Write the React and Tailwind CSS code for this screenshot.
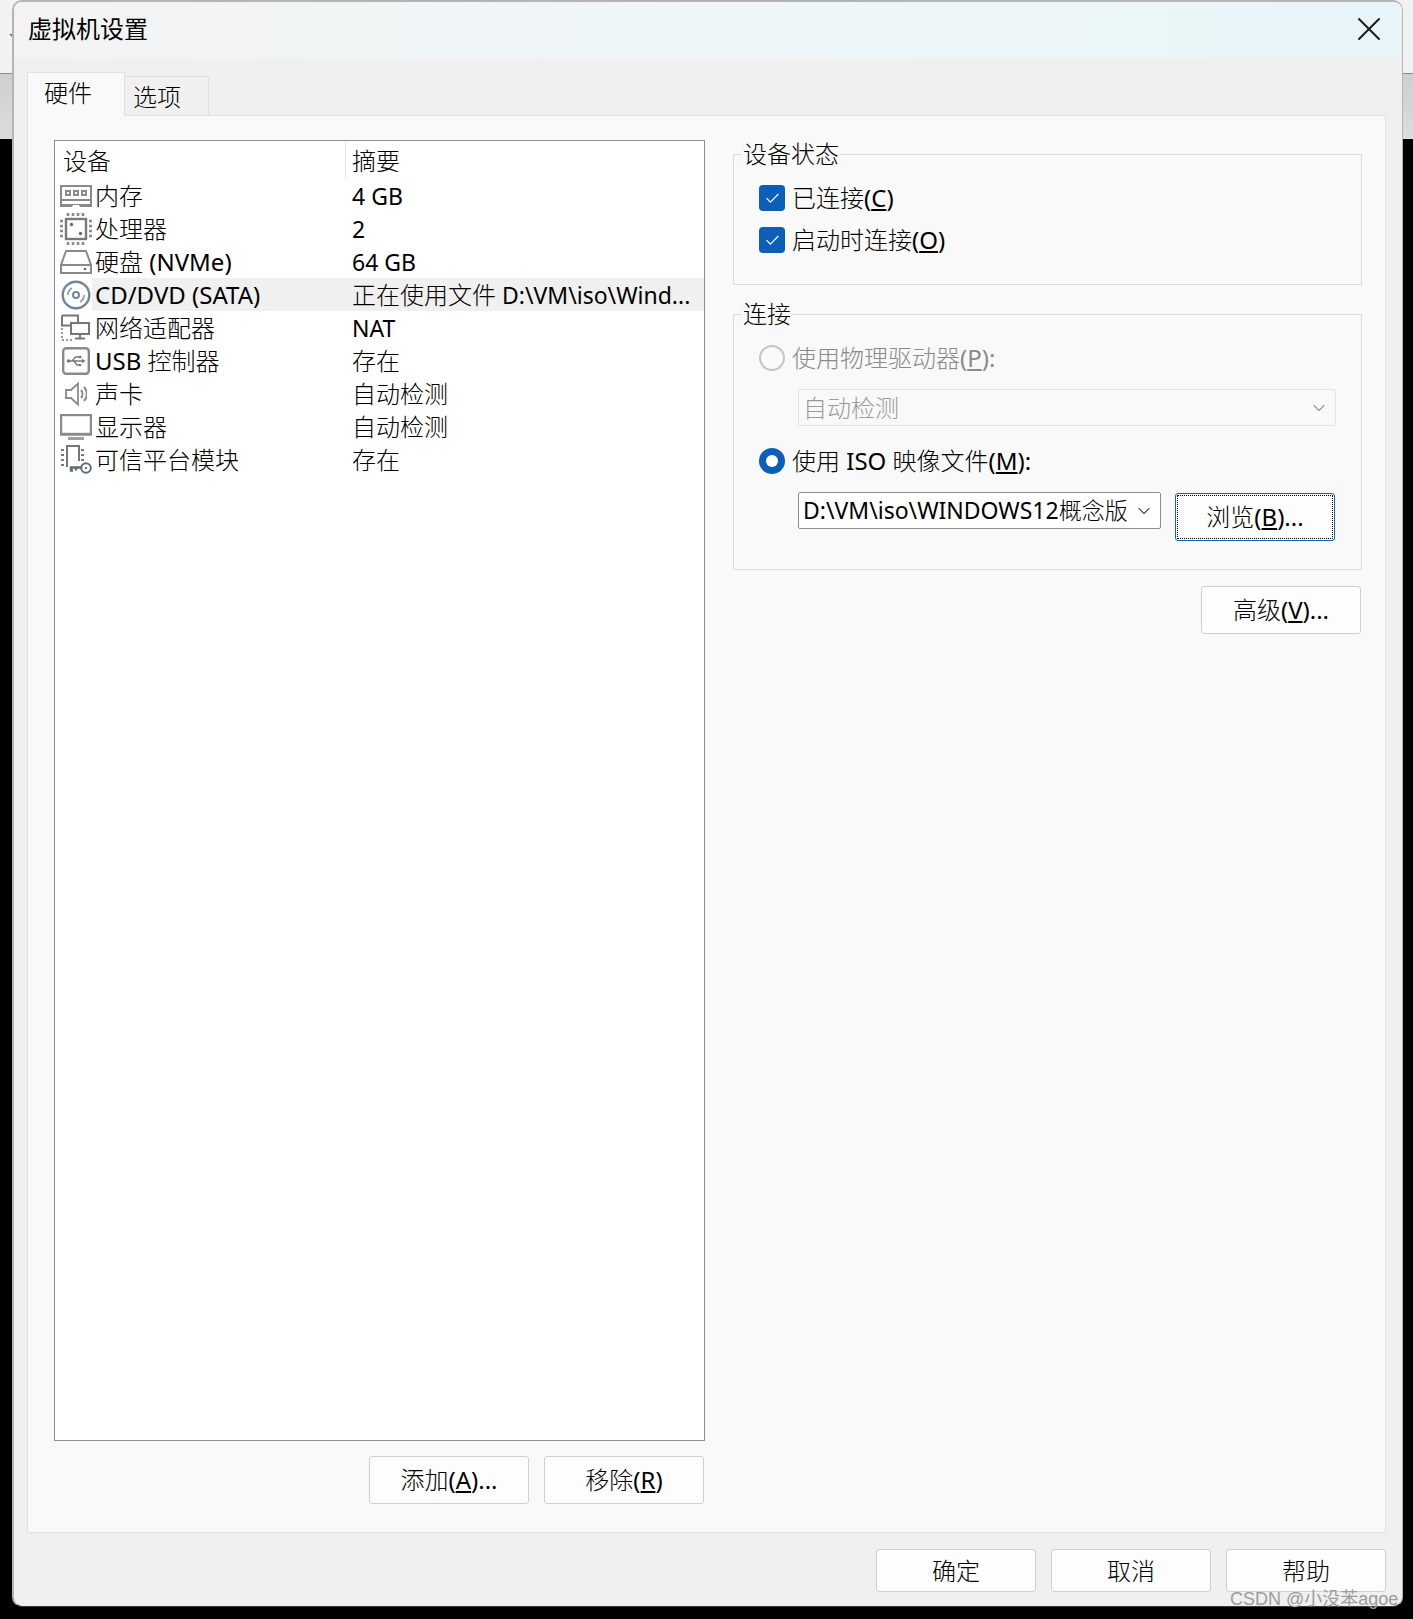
import React from 'react';
import { X, ChevronDown, Check } from 'lucide-react';

const FONT = "font-['Noto_Sans','Noto_Sans_CJK_SC',sans-serif]";

// latin runs are regular weight, the chinese stays light
function Mixed({ text, latin = '' }) {
  return text.split(/([\x20-\x7e]+)/).map((part, i) =>
    /[\x21-\x7e]/.test(part) ? <span key={i} className={`font-normal ${latin}`}>{part}</span> : part
  );
}

function RamIcon() {
  return (
    <svg width="32" height="22" viewBox="0 0 32 22" fill="none">
      <path d="M0 0h32v22H20l-1-2h-6l-1 2H0z" fill="#8a8a8a" />
      <rect x="2" y="2" width="28" height="12" fill="#fff" />
      <rect x="2" y="16" width="28" height="3" fill="#fff" />
      <rect x="5" y="5" width="6" height="6" fill="#8a8a8a" />
      <rect x="13" y="5" width="6" height="6" fill="#8a8a8a" />
      <rect x="21" y="5" width="6" height="6" fill="#8a8a8a" />
      <rect x="7" y="7" width="2" height="2" fill="#fff" />
      <rect x="15" y="7" width="2" height="2" fill="#fff" />
      <rect x="23" y="7" width="2" height="2" fill="#fff" />
    </svg>
  );
}

function CpuIcon() {
  return (
    <svg width="32" height="32" viewBox="0 0 32 32" fill="none">
      <rect x="6" y="6" width="20" height="20" fill="none" stroke="#7a7a7a" strokeWidth="2.4" />
      <circle cx="11.5" cy="11.5" r="1.7" fill="#6a6a6a" />
      <circle cx="20.5" cy="20.5" r="1.7" fill="#6a6a6a" />
      <path d="M8 0v3M13 0v3M18 0v3M23 0v3M8 29v3M13 29v3M18 29v3M23 29v3" stroke="#8a8a8a" strokeWidth="2.6" />
      <path d="M0 8h3M0 13h3M0 18h3M0 23h3M29 8h3M29 13h3M29 18h3M29 23h3" stroke="#8a8a8a" strokeWidth="2.6" />
    </svg>
  );
}

function DiskIcon() {
  return (
    <svg width="32" height="24" viewBox="0 0 32 24" fill="none">
      <path d="M6 1h20l5 14H1z" stroke="#8a8a8a" strokeWidth="2" fill="#fff" />
      <rect x="0" y="14" width="32" height="10" fill="#8a8a8a" />
      <rect x="2" y="16" width="28" height="6" fill="#fff" />
      <circle cx="25" cy="19" r="1.3" fill="#666" />
    </svg>
  );
}

function DiscIcon() {
  return (
    <svg width="30" height="30" viewBox="0 0 30 30" fill="none">
      <circle cx="15" cy="15" r="13.3" stroke="#6f8799" strokeWidth="2.4" />
      <circle cx="15" cy="15" r="3" stroke="#6f8799" strokeWidth="2" />
      <path d="M7 15a8 8 0 0 1 4-7M23 15a8 8 0 0 1-4 7" stroke="#8ba0b0" strokeWidth="1.8" />
    </svg>
  );
}

function NetIcon() {
  return (
    <svg width="30" height="28" viewBox="0 0 30 28" fill="none">
      <path d="M1 1.5h16v8" stroke="#777" strokeWidth="2" />
      <path d="M1 1.5v10h8" stroke="#777" strokeWidth="2" />
      <rect x="10" y="9" width="18" height="11" stroke="#777" strokeWidth="2" fill="#fff" />
      <path d="M19 20v4M14 24.5h10" stroke="#777" strokeWidth="2" />
      <path d="M1 14v12h12" stroke="#999" strokeWidth="2" strokeDasharray="2 2" />
    </svg>
  );
}

function UsbIcon() {
  return (
    <svg width="28" height="28" viewBox="0 0 28 28" fill="none">
      <rect x="1.2" y="1.2" width="25.6" height="25.6" rx="3" stroke="#8a8a8a" strokeWidth="2.4" />
      <path d="M7 14h14M10 14l3.5-4H17M12 14l3 4h2" stroke="#777" strokeWidth="1.3" />
      <circle cx="6.5" cy="14" r="1.8" fill="#777" />
      <path d="M20 11.8l3.5 2.2-3.5 2.2z" fill="#777" />
      <rect x="17" y="8.8" width="2.4" height="2.4" fill="#777" />
      <circle cx="18" cy="18" r="1.3" fill="#777" />
    </svg>
  );
}

function SpeakerIcon() {
  return (
    <svg width="22" height="26" viewBox="0 0 22 26" fill="none">
      <path d="M1 9h5l7-6.5v21L6 17H1z" stroke="#8a8a8a" strokeWidth="1.8" />
      <path d="M16 9a6 6 0 0 1 0 8M19 6a10 10 0 0 1 0 14" stroke="#8a8a8a" strokeWidth="2" />
    </svg>
  );
}

function MonitorIcon() {
  return (
    <svg width="32" height="26" viewBox="0 0 32 26" fill="none">
      <rect x="1" y="1" width="30" height="19" stroke="#8a8a8a" strokeWidth="2.4" fill="#fff" />
      <path d="M0 20.5h32" stroke="#8a8a8a" strokeWidth="2.4" />
      <rect x="8" y="23" width="16" height="3" fill="#a0a0a0" />
    </svg>
  );
}

function TpmIcon() {
  return (
    <svg width="32" height="30" viewBox="0 0 32 30" fill="none">
      <path d="M7 22V1h12v15" stroke="#6e7a84" strokeWidth="2" />
      <path d="M1 5h3M1 10h3M1 15h3M1 20h3M21 5h3M21 10h3M21 15h3" stroke="#6e7a84" strokeWidth="2" />
      <circle cx="26" cy="23" r="4.8" stroke="#5f6b75" strokeWidth="2" fill="#fff" />
      <circle cx="26" cy="23" r="1.2" fill="#5f6b75" />
      <path d="M21 22.5H11v3h2M16 22.5v3" stroke="#5f6b75" strokeWidth="2.4" />
    </svg>
  );
}

const devices = [
  { icon: <RamIcon />, name: '内存', summary: '4 GB' },
  { icon: <CpuIcon />, name: '处理器', summary: '2' },
  { icon: <DiskIcon />, name: '硬盘 (NVMe)', summary: '64 GB' },
  { icon: <DiscIcon />, name: 'CD/DVD (SATA)', summary: '正在使用文件 D:\\VM\\iso\\Wind...', active: true },
  { icon: <NetIcon />, name: '网络适配器', summary: 'NAT' },
  { icon: <UsbIcon />, name: 'USB 控制器', summary: '存在' },
  { icon: <SpeakerIcon />, name: '声卡', summary: '自动检测' },
  { icon: <MonitorIcon />, name: '显示器', summary: '自动检测' },
  { icon: <TpmIcon />, name: '可信平台模块', summary: '存在' },
];

function Btn({ className, children }) {
  return (
    <button className={`flex items-center justify-center rounded-[3px] border border-[#d0d0d0] bg-[#fdfdfd] text-[24px] font-light text-black ${className}`}>
      {children}
    </button>
  );
}

function Mn({ children }) {
  return <span className="font-normal underline underline-offset-2">{children}</span>;
}

function P({ children }) {
  return <span className="font-normal">{children}</span>;
}

function CheckRow({ children }) {
  return (
    <div className="flex h-[26px] items-center gap-[7px]">
      <span className="flex size-[26px] items-center justify-center rounded-[4px] bg-[#0b5fb8]">
        <Check size={17} color="#fff" strokeWidth={1.6} />
      </span>
      <span className="text-[24px] font-light text-black">{children}</span>
    </div>
  );
}

function Group({ title, className, children }) {
  return (
    <div className={`relative border border-[#dcdcdc] pl-[25px] pt-[30px] ${className}`}>
      <span className="absolute left-[8px] top-[-16px] bg-[#f9f9f9] px-[1px] text-[24px] leading-[30px] font-light text-black">{title}</span>
      {children}
    </div>
  );
}

export default function App() {
  return (
    <div className={`relative h-[1619px] w-[1413px] overflow-hidden bg-black ${FONT}`}>
      <div className="flex h-[74px] items-center border-b border-[#8c8c8c] bg-[#f2f2f2] pb-[1px]">
        <span className="ml-[9px] h-0 w-0 border-x-[4px] border-t-[4px] border-x-transparent border-t-[#777]" />
      </div>
      <div className="h-[65px] bg-gradient-to-b from-[#cfcfcf] to-[#dcdcdc]" />

      <div className="absolute left-[12px] top-0 flex h-[1607px] w-[1391px] flex-col overflow-hidden rounded-[10px] border border-l-2 border-t-2 border-[#b4b4b4] border-b-[#3a3a3a] bg-[#f0f0f0]">
        <div className="flex h-[56px] items-center justify-between bg-gradient-to-r from-[#f3f3f3] via-[#eef6f8] to-[#e8f5f8] pb-[2px] pl-[14px] pr-[13px]">
          <span className="text-[24px] text-black">虚拟机设置</span>
          <X size={40} color="#1a1a1a" strokeWidth={1.2} />
        </div>

        <div className="mt-[14px] flex items-end pl-[13px]">
          <div className="relative z-10 -mb-px flex h-[44px] w-[98px] items-start border border-b-0 border-[#e2e2e2] bg-[#f9f9f9] pl-[16px] text-[24px] leading-[39px] font-light text-black">硬件</div>
          <div className="flex h-[39px] w-[84px] items-start border border-b-0 border-l-0 border-[#e2e2e2] bg-[#f0f0f0] pl-[8px] text-[24px] leading-[39px] font-light text-black">选项</div>
        </div>

        <div className="ml-[13px] flex h-[1418px] w-[1359px] gap-[28px] border border-[#e2e2e2] bg-[#f9f9f9] pl-[26px] pt-[24px]">
          <div className="flex w-[651px] flex-col">
            <div className="h-[1301px] border border-[#8a8f9a] bg-white">
              <div className="flex h-[38px] items-center text-[24px] font-light text-black">
                <div className="h-full w-[291px] border-r border-[#e4e4e4] pl-[8px] leading-[40px]">设备</div>
                <div className="pl-[6px] pt-[2px]">摘要</div>
              </div>
              {devices.map((d) => (
                <div key={d.name} className="flex h-[33px] items-center">
                  <div className="flex w-[37px] justify-center pl-[5px]">{d.icon}</div>
                  <div className={`flex h-full flex-1 items-center text-[24px] font-light text-black ${d.active ? 'bg-[#f0f0f0]' : ''}`}>
                    <div className="w-[254px] whitespace-pre pl-[3px]"><Mixed text={d.name} /></div>
                    <div className="whitespace-pre pl-[6px]"><Mixed text={d.summary} latin="text-[23px]" /></div>
                  </div>
                </div>
              ))}
            </div>
            <div className="mt-[15px] flex justify-end gap-[15px] pr-[1px]">
              <Btn className="h-[48px] w-[160px]">添加<P>(</P><Mn>A</Mn><P>)...</P></Btn>
              <Btn className="h-[48px] w-[160px]">移除<P>(</P><Mn>R</Mn><P>)</P></Btn>
            </div>
          </div>

          <div className="flex w-[629px] flex-col pt-[14px]">
            <Group title="设备状态" className="h-[131px]">
              <div className="flex flex-col gap-[16px]">
                <CheckRow>已连接<P>(</P><Mn>C</Mn><P>)</P></CheckRow>
                <CheckRow>启动时连接<P>(</P><Mn>O</Mn><P>)</P></CheckRow>
              </div>
            </Group>

            <Group title="连接" className="mt-[29px] h-[256px]">
              <div className="flex h-[26px] items-center gap-[7px]">
                <span className="size-[26px] rounded-full border-2 border-[#c4c4c4]" />
                <span className="text-[24px] font-light text-[#8a8a8a]">使用物理驱动器<P>(</P><Mn>P</Mn><P>):</P></span>
              </div>
              <div className="ml-[39px] mt-[18px] flex h-[37px] w-[538px] items-center justify-between rounded-[2px] border border-[#e4e4e4] bg-[#f9f9f9] pl-[4px] pr-[6px] text-[24px] font-light text-[#9a9a9a]">
                自动检测
                <ChevronDown size={20} color="#9a9a9a" strokeWidth={1.4} />
              </div>
              <div className="mt-[22px] flex h-[26px] items-center gap-[7px]">
                <span className="flex size-[26px] items-center justify-center rounded-full bg-[#0b5fb8]">
                  <span className="size-[12px] rounded-full bg-white" />
                </span>
                <span className="whitespace-pre text-[24px] font-light text-black">使用 <P>ISO</P> 映像文件<P>(</P><Mn>M</Mn><P>):</P></span>
              </div>
              <div className="ml-[39px] mt-[18px] flex items-start gap-[14px]">
                <div className="flex h-[37px] w-[363px] items-center justify-between rounded-[2px] border border-[#8e8e8e] bg-white pl-[4px] pr-[6px] text-[23px] font-light text-black">
                  <span className="whitespace-nowrap"><Mixed text="D:\VM\iso\WINDOWS12概念版" /></span>
                  <ChevronDown size={20} color="#555" strokeWidth={1.4} />
                </div>
                <button className="mt-[1px] flex h-[48px] w-[160px] items-center justify-center rounded-[3px] border-[1.5px] border-[#0b66c3] bg-[#fdfdfd] text-[24px] font-light text-black outline-1 -outline-offset-3 outline-dotted outline-black">
                  浏览<P>(</P><Mn>B</Mn><P>)...</P>
                </button>
              </div>
            </Group>

            <Btn className="mr-[1px] mt-[16px] h-[48px] w-[160px] self-end">高级<P>(</P><Mn>V</Mn><P>)...</P></Btn>
          </div>
        </div>

        <div className="mt-[16px] flex justify-end gap-[15px] pr-[16px]">
          <Btn className="h-[43px] w-[160px]">确定</Btn>
          <Btn className="h-[43px] w-[160px]">取消</Btn>
          <Btn className="h-[43px] w-[160px]">帮助</Btn>
        </div>
      </div>

      <span className="absolute left-[1230px] top-[1588px] whitespace-nowrap font-['Liberation_Sans','Noto_Sans_CJK_SC',sans-serif] text-[18px] leading-[22px] text-[#9c9c9c]">CSDN @小没苯agoe</span>
    </div>
  );
}
